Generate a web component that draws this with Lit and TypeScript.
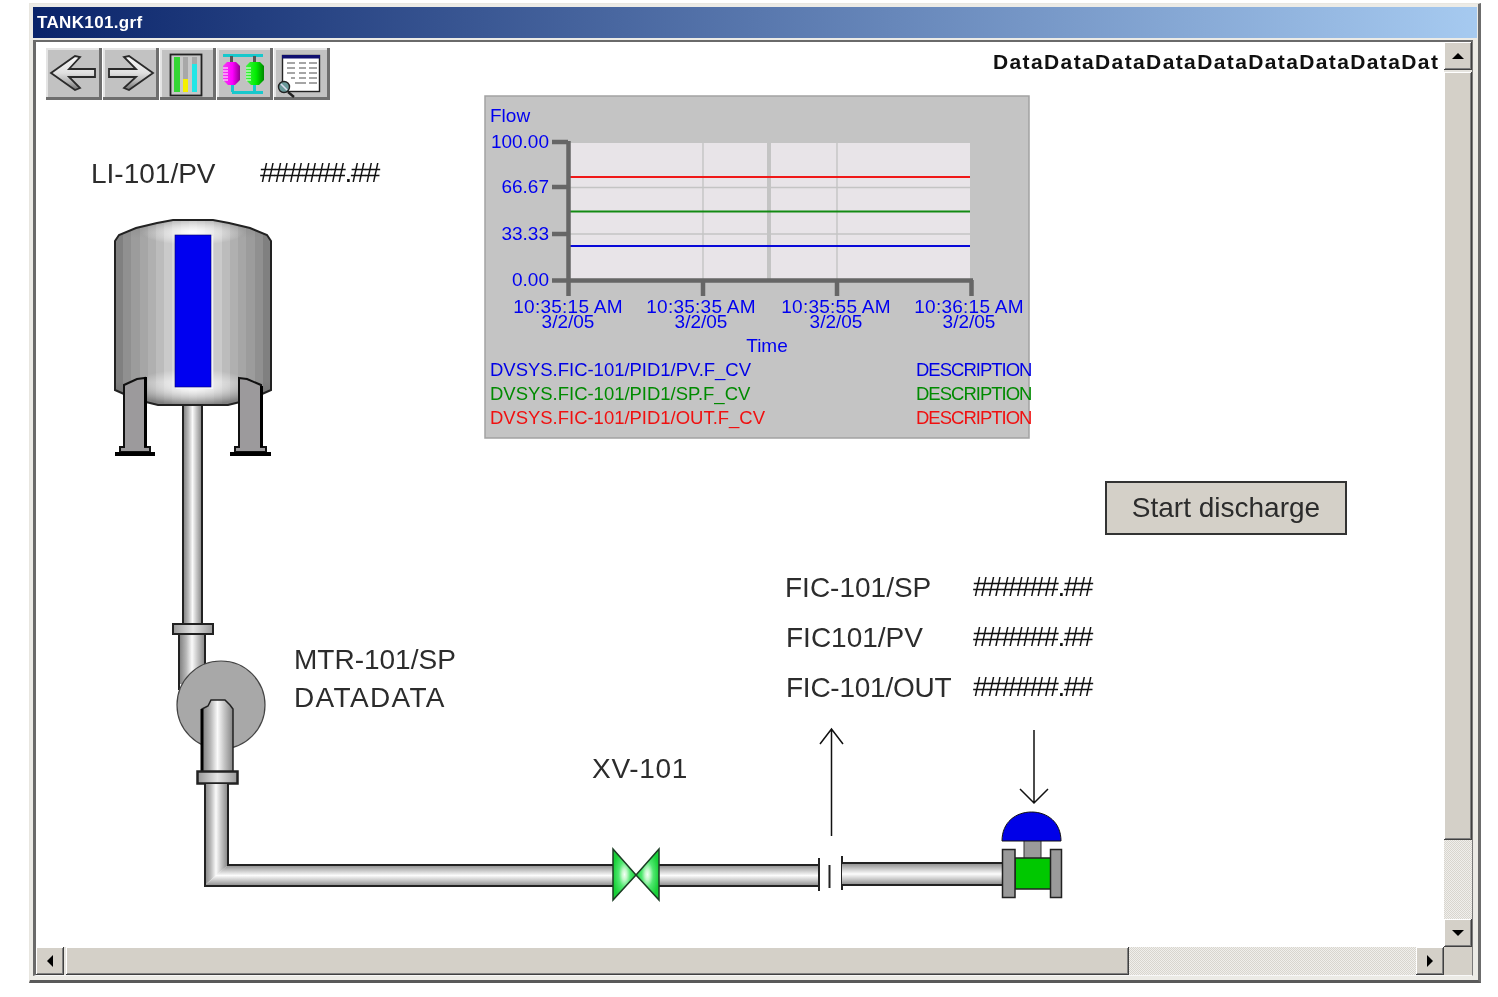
import { LitElement, html, css, svg } from "lit";
import { customElement } from "lit/decorators.js";

const ARROW_STOPS = svg`
  <stop offset="0" stop-color="#fafafa"/><stop offset=".5" stop-color="#e0e0e0"/><stop offset=".75" stop-color="#b4b4b4"/><stop offset="1" stop-color="#707070"/>`;

@customElement("hmi-toolbar")
class HmiToolbar extends LitElement {
  static styles = css`
    :host { display: flex; gap: 1px; }
    .tb {
      width: 56px; height: 52px; padding: 0; border: 0; background: #c2c2c2;
      box-shadow: inset -3px -3px #6e6e6e, inset 2px 2px #e4e4e4;
      display: block;
    }
    svg { display: block; width: 56px; height: 52px; }
  `;
  render() {
    return html`
      <button class="tb"><svg viewBox="0 0 56 52">
        <defs><linearGradient id="ar" x1="0" y1="0" x2="0" y2="1">${ARROW_STOPS}</linearGradient></defs>
        <polygon points="5,25 29,8 34,9 23,21 49,21 49,29 23,29 34,40 29,42" fill="url(#ar)" stroke="#2a2a2a" stroke-width="1.800"/>
      </svg></button>
      <button class="tb"><svg viewBox="0 0 56 52">
        <defs><linearGradient id="ar2" x1="0" y1="0" x2="0" y2="1">${ARROW_STOPS}</linearGradient></defs>
        <polygon points="50,25 26,8 21,9 33,21 6,21 6,29 33,29 21,40 26,42" fill="url(#ar2)" stroke="#2a2a2a" stroke-width="1.800"/>
      </svg></button>
      <button class="tb"><svg viewBox="0 0 56 52">
        <rect x="10.500" y="6.500" width="31" height="41" fill="#c8c8c8" stroke="#222" stroke-width="1.800"/>
        <rect x="14" y="9" width="6" height="35" fill="#33d633"/>
        <rect x="23" y="9" width="5" height="35" fill="#a8a8a8"/><rect x="23" y="31" width="5" height="13" fill="#f5f000"/>
        <rect x="32" y="9" width="5" height="35" fill="#a8a8a8"/><rect x="32" y="16" width="5" height="28" fill="#22e6e6"/>
      </svg></button>
      <button class="tb"><svg viewBox="0 0 56 52">
        <defs>
          <linearGradient id="mg" x1="0" x2="1" y1="0" y2="0"><stop offset="0" stop-color="#f03cf0"/><stop offset=".55" stop-color="#ff00ff"/><stop offset="1" stop-color="#900090"/></linearGradient>
          <linearGradient id="gn" x1="0" x2="1" y1="0" y2="0"><stop offset="0" stop-color="#44ee44"/><stop offset=".55" stop-color="#00ee00"/><stop offset="1" stop-color="#008800"/></linearGradient>
        </defs>
        <rect x="6" y="6" width="40" height="3" fill="#18c8cc"/><rect x="15" y="43" width="31" height="3" fill="#18c8cc"/>
        <rect x="13" y="8" width="3" height="6" fill="#555"/><rect x="36" y="8" width="3" height="6" fill="#555"/>
        <rect x="14" y="36" width="3" height="8" fill="#18c8cc"/><rect x="36" y="36" width="3" height="8" fill="#18c8cc"/>
        <path d="M6,18 L10,14 L19,14 L23,18 L23,32 L18,37 L11,37 L6,32 Z" fill="url(#mg)"/>
        <path d="M29,18 L33,14 L43,14 L47,18 L47,32 L42,37 L34,37 L29,32 Z" fill="url(#gn)"/>
        <path d="M6,20h5M6,23h5M6,26h5M6,29h5M6,32h5M29,20h5M29,23h5M29,26h5M29,29h5M29,32h5" stroke="#fff" stroke-width="1"/>
      </svg></button>
      <button class="tb"><svg viewBox="0 0 56 52">
        <rect x="8.500" y="7.500" width="37" height="36" fill="#fff" stroke="#222" stroke-width="1.400"/>
        <rect x="8" y="7" width="38" height="3.500" fill="#101070"/>
        <path d="M13,15h8M25,15h7M35,15h8M13,20h8M25,20h7M35,20h8M13,25h8M25,25h7M35,25h8M17,30h4M25,30h7M35,30h8M21,35h11M35,35h8" stroke="#888" stroke-width="1.400"/>
        <line x1="14" y1="44" x2="20" y2="49" stroke="#222" stroke-width="2.400"/>
        <circle cx="10" cy="39" r="5.500" fill="#6a9a9a" stroke="#222" stroke-width="1.400"/>
        <line x1="7" y1="36" x2="13" y2="42" stroke="#dde" stroke-width="1.600"/>
      </svg></button>
    `;
  }
}

@customElement("trend-chart")
class TrendChart extends LitElement {
  static styles = css`
    :host { display: block; width: 544px; height: 342px; }
    svg { display: block; overflow: visible; }
    text { font-family: "Liberation Sans", Arial, sans-serif; fill: #0000f0; font-size: 19px; }
    .time { letter-spacing: .25px; }
    .tag { font-size: 18.500px; letter-spacing: -.02px; }
    .desc { font-size: 18.500px; letter-spacing: -1px; }
    .axis { stroke: #666; stroke-width: 4.500; fill: none; }
    .grid { stroke: #c4c4c4; stroke-width: 1.400; }
  `;
  render() {
    const xt = [
      [568, "10:35:15 AM"],
      [701, "10:35:35 AM"],
      [836, "10:35:55 AM"],
      [969, "10:36:15 AM"],
    ] as [number, string][];
    const yt = [[142, "100.00"], [187, "66.67"], [234, "33.33"], [280, "0.00"]] as [number, string][];
    const legend = [
      ["DVSYS.FIC-101/PID1/PV.F_CV", "#0000e6", 376],
      ["DVSYS.FIC-101/PID1/SP.F_CV", "#008a00", 400],
      ["DVSYS.FIC-101/PID1/OUT.F_CV", "#f01010", 424],
    ] as [string, string, number][];
    return html`<svg width="544" height="342" viewBox="485 96 544 342">
      <rect x="485" y="96" width="544" height="342" fill="#c4c4c4" stroke="#a2a2a2" stroke-width="1.500"/>
      <rect x="570" y="143" width="400" height="137" fill="#e8e4e8"/>
      <line class="grid" x1="570" x2="970" y1="187.500" y2="187.500"/>
      <line class="grid" x1="570" x2="970" y1="234" y2="234"/>
      <line class="grid" x1="703" x2="703" y1="143" y2="280"/>
      <line class="grid" x1="837" x2="837" y1="143" y2="280"/>
      <line x1="769" x2="769" y1="143" y2="280" stroke="#c4c4c4" stroke-width="4"/>
      <line x1="568" x2="970" y1="177" y2="177" stroke="#f01818" stroke-width="2"/>
      <line x1="568" x2="970" y1="211.500" y2="211.500" stroke="#128a12" stroke-width="2"/>
      <line x1="568" x2="970" y1="246" y2="246" stroke="#0808d8" stroke-width="2"/>
      <path class="axis" d="M568.500,141V296M552,142H568M552,187H568M552,234H568M552,280.500H973M703,280V296M837,280V296M971.500,280V296"/>
      <text x="490" y="122">Flow</text>
      ${yt.map(([y, t]) => svg`<text x="549" y=${y + 6} text-anchor="end">${t}</text>`)}
      ${xt.map(([x, t]) => svg`
        <text class="time" x=${x} y="313" text-anchor="middle">${t}</text>
        <text x=${x} y="328" text-anchor="middle">3/2/05</text>`)}
      <text x="767" y="352" text-anchor="middle" font-size="18">Time</text>
      ${legend.map(([t, c, y]) => svg`
        <text class="tag" x="490" y=${y} style="fill:${c}">${t}</text>
        <text class="desc" x="916" y=${y} style="fill:${c}">DESCRIPTION</text>`)}
    </svg>`;
  }
}

const BANDS = ["#808080", "#909090", "#9c9c9c", "#a6a6a6", "#b0b0b0", "#bcbcbc", "#cacaca", "#d6d6d6", "#dedede", "#e6e6e6"];
function bandStops() {
  const all = [...BANDS, ...[...BANDS].reverse().slice(1)];
  const n = all.length;
  return all.map((c, i) => svg`<stop offset=${i / n} stop-color=${c}/><stop offset=${(i + 1) / n} stop-color=${c}/>`);
}

@customElement("process-diagram")
class ProcessDiagram extends LitElement {
  static styles = css`
    :host { display: block; width: 100%; height: 100%; }
    svg { display: block; width: 100%; height: 100%; }
    text { font-family: "Liberation Sans", Arial, sans-serif; font-size: 28px; fill: #2c2c2c; }
    .hash { letter-spacing: -1.500px; fill: #111; }
    .wide { letter-spacing: 1.350px; }
    .xv { letter-spacing: .7px; }
    .out { letter-spacing: -.25px; }
    .ol { stroke: #222; stroke-width: 2; fill: none; }
    .thin { stroke: #111; stroke-width: 1.500; fill: none; }
  `;
  render() {
    const hash = "######.##";
    const body = "M115,241 L119,235 L136,228 L157,223 L173,220 L213,220 L229,223 L250,228 L267,235 L271,241 L271,390 L262,394 L248,400 L228,405 L158,405 L138,400 L124,394 L115,390 Z";
    return html`<svg viewBox="36 42 1408 905">
      <defs>
        <linearGradient id="pv" x1="0" x2="1" y1="0" y2="0">
          <stop offset="0" stop-color="#7c7c7c"/><stop offset=".28" stop-color="#b8b8b8"/><stop offset=".5" stop-color="#fafafa"/><stop offset=".72" stop-color="#c4c4c4"/><stop offset="1" stop-color="#848484"/>
        </linearGradient>
        <linearGradient id="ph" x1="0" x2="0" y1="0" y2="1">
          <stop offset="0" stop-color="#8a8a8a"/><stop offset=".3" stop-color="#d0d0d0"/><stop offset=".5" stop-color="#fcfcfc"/><stop offset=".7" stop-color="#d0d0d0"/><stop offset="1" stop-color="#8a8a8a"/>
        </linearGradient>
        <linearGradient id="tank" x1="0" x2="1" y1="0" y2="0">${bandStops()}</linearGradient>
        <linearGradient id="tshade" x1="0" x2="0" y1="0" y2="1">
          <stop offset="0" stop-color="#666" stop-opacity="0"/><stop offset="1" stop-color="#666" stop-opacity=".8"/>
        </linearGradient>
        <linearGradient id="tshade2" x1="0" x2="0" y1="1" y2="0">
          <stop offset="0" stop-color="#666" stop-opacity="0"/><stop offset="1" stop-color="#666" stop-opacity=".3"/>
        </linearGradient>
        <radialGradient id="glow" cx=".5" cy=".5" r=".5">
          <stop offset="0" stop-color="#fff" stop-opacity=".95"/><stop offset=".55" stop-color="#fff" stop-opacity=".45"/><stop offset="1" stop-color="#fff" stop-opacity="0"/>
        </radialGradient>
        <linearGradient id="fl" x1="0" x2="1" y1="0" y2="0">
          <stop offset="0" stop-color="#999"/><stop offset=".5" stop-color="#e4e4e4"/><stop offset="1" stop-color="#999"/>
        </linearGradient>
        <radialGradient id="vg" cx=".5" cy=".5" r=".5">
          <stop offset="0" stop-color="#f4fff6"/><stop offset=".22" stop-color="#c0f8c8"/><stop offset=".5" stop-color="#50e870"/><stop offset="1" stop-color="#18d038"/>
        </radialGradient>
        <clipPath id="tclip"><path d=${body}/></clipPath>
      </defs>

      <!-- tank -->
      <rect x="183" y="404" width="19" height="219" fill="url(#pv)"/>
      <path class="ol" d="M183,404V623M202,404V623"/>
      <path d=${body} fill="url(#tank)"/>
      <g clip-path="url(#tclip)">
        <rect x="115" y="220" width="156" height="18" fill="url(#tshade2)"/>
        <rect x="115" y="382" width="156" height="24" fill="url(#tshade)"/>
        <ellipse cx="193" cy="387" rx="62" ry="18" fill="url(#glow)"/>
        <ellipse cx="193" cy="232" rx="52" ry="13" fill="url(#glow)"/>
      </g>
      <path d=${body} fill="none" stroke="#222" stroke-width="2"/>
      <rect x="176" y="236" width="37" height="153" fill="#f4f4fa"/>
      <rect x="175" y="235" width="36" height="152" fill="#0000f0" stroke="#000070" stroke-width=".6"/>
      <path d="M124,385 L137,379 L145,378 L145,447 L150,447 L150,452 L120,452 L120,447 L124,447 Z" fill="#9c9a9c" stroke="#111" stroke-width="2"/>
      <path d="M145.500,377V447" stroke="#000" stroke-width="3"/>
      <rect x="115" y="452" width="40" height="4" fill="#000"/>
      <path d="M239,378 L247,379 L261,385 L261,447 L266,447 L266,452 L235,452 L235,447 L239,447 Z" fill="#9c9a9c" stroke="#111" stroke-width="2"/>
      <path d="M261.500,386V447" stroke="#000" stroke-width="3"/>
      <rect x="230" y="452" width="41" height="4" fill="#000"/>

      <!-- pump -->
      <rect x="179" y="634" width="26" height="50" fill="url(#pv)"/>
      <path class="ol" d="M179,634V690M205,634V664"/>
      <rect x="173" y="624" width="40" height="10" fill="url(#fl)" stroke="#222" stroke-width="2"/>
      <circle cx="221" cy="705" r="44" fill="#a8a8a8" stroke="#444" stroke-width="1.200"/>
      <path d="M202,771 L202,709 L208,706 L211,700 L225,700 L230,705 L233,709 L233,771 Z" fill="url(#pv)"/>
      <path d="M202,771 L202,709 L208,706 L211,700 L225,700 L230,705 L233,709 L233,771" fill="none" stroke="#222" stroke-width="1.500"/>
      <path d="M202,709V771" stroke="#000" stroke-width="3"/>
      <rect x="197.500" y="771.500" width="40" height="12" fill="url(#fl)" stroke="#222" stroke-width="2.500"/>

      <!-- discharge line -->
      <polygon points="204,784 228,784 228,865 204,886" fill="url(#pv)"/>
      <polygon points="204,886 228,865 613,865 613,886" fill="url(#ph)"/>
      <path class="ol" d="M205,784V886H613M228,784V865H613"/>
      <rect x="659" y="865" width="160" height="21" fill="url(#ph)"/>
      <path class="ol" d="M659,865H819M659,886H819"/>
      <polygon points="613,849 636,875 613,900" fill="url(#vg)" stroke="#1c3c24" stroke-width="1.500"/>
      <polygon points="659,849 636,875 659,900" fill="url(#vg)" stroke="#1c3c24" stroke-width="1.500"/>
      <path class="ol" d="M819,858V891M829.500,865V888M842,856V890"/>
      <rect x="842" y="863" width="160" height="22" fill="url(#ph)"/>
      <path class="ol" d="M842,863H1002M842,885H1002"/>

      <!-- control valve -->
      <rect x="1024" y="840" width="17" height="19" fill="#9a9a9a" stroke="#333"/>
      <rect x="1015" y="858" width="36" height="31" fill="#00c800" stroke="#222" stroke-width="1.500"/>
      <rect x="1002.500" y="849.500" width="12.500" height="48" fill="#9a9a9a" stroke="#222" stroke-width="1.500"/>
      <rect x="1050.500" y="849.500" width="11" height="48" fill="#9a9a9a" stroke="#222" stroke-width="1.500"/>
      <path d="M1002,841 C1002,822 1016,812 1031.500,812 C1047,812 1061,822 1061,841 Z" fill="#0000e8" stroke="#111" stroke-width="1"/>

      <!-- signal arrows -->
      <path class="thin" d="M831.500,836V729M820,744L831.500,729L843,744"/>
      <path class="thin" d="M1034,730V803M1020,789L1034,803L1048,789"/>

      <!-- labels -->
      <text x="91" y="183">LI-101/PV</text>
      <text class="hash" x="260" y="182">${hash}</text>
      <text x="294" y="669">MTR-101/SP</text>
      <text class="wide" x="294" y="707">DATADATA</text>
      <text class="xv" x="592" y="778">XV-101</text>
      <text x="785" y="597">FIC-101/SP</text>
      <text class="hash" x="973" y="596">${hash}</text>
      <text x="786" y="647">FIC101/PV</text>
      <text class="hash" x="973" y="646">${hash}</text>
      <text class="out" x="786" y="697">FIC-101/OUT</text>
      <text class="hash" x="973" y="696">${hash}</text>
    </svg>`;
  }
}

@customElement("app-root")
class AppRoot extends LitElement {
  static styles = css`
    :host { display: block; width: 1498px; height: 997px; background: #fff; overflow: hidden; font-family: "Liberation Sans", Arial, sans-serif; }
    .window {
      box-sizing: border-box; width: 1452px; height: 980px; margin: 3px 0 0 29px;
      background: #ecebe6;
      border-style: solid; border-width: 1px 3px 3px 1px; border-color: #e8e6e0 #6c6c6c #5a5a5a #e8e6e0;
      padding: 3px 1px 4px 3px;
      display: flex; flex-direction: column;
      filter: blur(.35px);
    }
    .title {
      height: 31px; flex: none; box-sizing: border-box; padding-left: 4px;
      background: linear-gradient(90deg, #0a246a, #a6caf0);
      color: #fff; font: bold 17px "Liberation Sans", Arial, sans-serif; letter-spacing: .35px;
      line-height: 31px; white-space: nowrap;
    }
    .client {
      flex: 1; margin: 2px 4px 0 0; min-height: 0;
      background: #fff; box-sizing: border-box;
      border-style: solid; border-width: 2px 1px 1px 3px; border-color: #6a6a6a #7a7a7a #f8f8f8 #6a6a6a;
      display: grid; grid-template-columns: 1fr 28px; grid-template-rows: 1fr 28px;
    }
    .canvas { position: relative; overflow: hidden; min-width: 0; min-height: 0; }
    process-diagram { position: absolute; inset: 0; }
    hmi-toolbar { position: absolute; left: 10px; top: 6px; }
    trend-chart { position: absolute; left: 449px; top: 54px; }
    .data {
      position: absolute; left: 957px; top: 6px; width: 447px; overflow: hidden; white-space: nowrap;
      font: bold 21px "Liberation Sans", Arial, sans-serif; letter-spacing: 1.380px; color: #111; line-height: 28px;
    }
    .start {
      position: absolute; left: 1069px; top: 439px; width: 242px; height: 54px; box-sizing: border-box;
      background: #d4d0c8; border: 2px solid #333; padding: 0;
      font: 28px "Liberation Sans", Arial, sans-serif; color: #2c2c2c;
    }
    .vbar, .hbar { display: flex; background: #e6e4df; }
    .vbar { flex-direction: column; }
    .btn {
      flex: none; width: 28px; height: 28px; box-sizing: border-box;
      background: #d4d0c8;
      box-shadow: inset -1px -1px #404040, inset 1px 1px #fff, inset -2px -2px #808080;
      display: flex; align-items: center; justify-content: center;
    }
    .thumb { background: #d4d0c8; box-shadow: inset -1px -1px #404040, inset 1px 1px #fff, inset -2px -2px #808080; flex: none; }
    .vbar .thumb { height: 768px; margin-top: 2px; }
    .hbar .thumb { width: 1063px; margin-left: 2px; }
    .track {
      flex: 1;
      background: repeating-conic-gradient(#f0efec 0 25%, #d8d5ce 0 50%) 0 0 / 2px 2px;
    }
    .corner { background: #d4d0c8; }
    svg.a { display: block; width: 12px; height: 12px; }
  `;
  render() {
    return html`
      <div class="window">
        <div class="title">TANK101.grf</div>
        <div class="client">
          <div class="canvas">
            <process-diagram></process-diagram>
            <hmi-toolbar></hmi-toolbar>
            <trend-chart></trend-chart>
            <div class="data">DataDataDataDataDataDataDataDataDataData</div>
            <button class="start">Start discharge</button>
          </div>
          <div class="vbar">
            <div class="btn"><svg class="a" viewBox="0 0 12 12"><polygon points="6,3 12,9 0,9" fill="#000"/></svg></div>
            <div class="thumb"></div>
            <div class="track"></div>
            <div class="btn"><svg class="a" viewBox="0 0 12 12"><polygon points="0,3 12,3 6,9" fill="#000"/></svg></div>
          </div>
          <div class="hbar">
            <div class="btn"><svg class="a" viewBox="0 0 12 12"><polygon points="9,0 9,12 3,6" fill="#000"/></svg></div>
            <div class="thumb"></div>
            <div class="track"></div>
            <div class="btn"><svg class="a" viewBox="0 0 12 12"><polygon points="3,0 9,6 3,12" fill="#000"/></svg></div>
          </div>
          <div class="corner"></div>
        </div>
      </div>
    `;
  }
}
